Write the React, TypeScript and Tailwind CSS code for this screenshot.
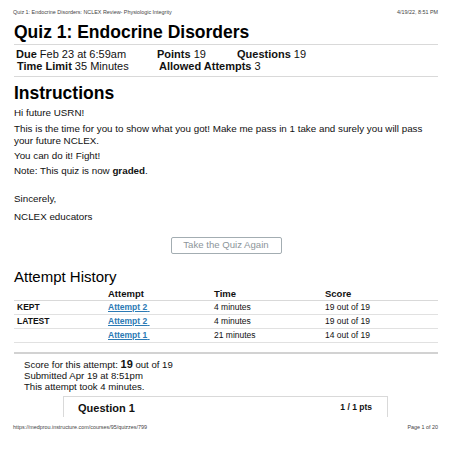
const attempts = [
  { label: "KEPT", attempt: "Attempt 2", time: "4 minutes", score: "19 out of 19" },
  { label: "LATEST", attempt: "Attempt 2", time: "4 minutes", score: "19 out of 19" },
  { label: "", attempt: "Attempt 1", time: "21 minutes", score: "14 out of 19" },
];

export default function App() {
  return (
    <div
      className="w-[452px] h-[452px] overflow-hidden bg-white text-[#111]"
      style={{ fontFamily: '"Liberation Sans", Arial, sans-serif' }}
    >
      {/* print header */}
      <div className="flex justify-between pl-[13px] pr-[14px] pt-[9px] text-[5.4px] leading-[6px] text-[#444]">
        <span>Quiz 1: Endocrine Disorders: NCLEX Review- Physiologic Integrity</span>
        <span>4/19/22, 8:51 PM</span>
      </div>

      <div className="px-[14px]">
        <h1 className="mt-[7px] text-[17.5px] font-bold leading-[20px] text-black">
          Quiz 1: Endocrine Disorders
        </h1>

        <div className="mt-[2px] border-t border-[#d9d9d9] pb-[4px] pt-[3px] text-[11px] leading-[12px]">
          <div className="flex pl-[2px]">
            <span className="w-[141px]">
              <b>Due</b> Feb 23 at 6:59am
            </span>
            <span className="w-[80px]">
              <b>Points</b> 19
            </span>
            <span>
              <b>Questions</b> 19
            </span>
          </div>
          <div className="flex pl-[3px]">
            <span className="w-[142px]">
              <b>Time Limit</b> 35 Minutes
            </span>
            <span>
              <b>Allowed Attempts</b> 3
            </span>
          </div>
        </div>
        <div className="border-t border-[#d9d9d9]" />

        <h2 className="mt-[6px] text-[17.5px] font-bold leading-[20px] text-black">Instructions</h2>

        <div className="mt-[4px] text-[9.8px] leading-[12px]">
          <p>Hi future USRN!</p>
          <p className="mt-[4px]">
            This is the time for you to show what you got! Make me pass in 1 take and surely you will pass your
            future NCLEX.
          </p>
          <p className="mt-[3px]">You can do it! Fight!</p>
          <p className="mt-[3px]">
            Note: This quiz is now <b>graded</b>.
          </p>
          <p className="mt-[16px]">Sincerely,</p>
          <p className="mt-[6px]">NCLEX educators</p>
        </div>

        <div className="mt-[14px] flex justify-center">
          <div className="flex h-[17px] w-[111px] items-center justify-center rounded-[2px] border border-[#a3adb2] text-[9.6px] text-[#8c959a]">
            Take the Quiz Again
          </div>
        </div>

        <h3 className="mt-[14px] text-[15px] leading-[18px] text-black">Attempt History</h3>

        <div className="mt-[2px] text-[8.5px]">
          <div className="flex h-[13px] items-center border-b border-[#d9d9d9] text-[9.5px] font-bold">
            <span className="w-[94px]" />
            <span className="w-[106px]">Attempt</span>
            <span className="w-[111px]">Time</span>
            <span>Score</span>
          </div>
          {attempts.map((a, i) => (
            <div key={i} className="flex h-[14px] items-center border-b border-[#e1e1e1]">
              <span className="w-[94px] pl-[3px] font-bold">{a.label}</span>
              <span className="w-[106px]">
                <span className="font-bold text-[#2b7ab4] underline">{a.attempt}{"\u00a0"}</span>
              </span>
              <span className="w-[111px]">{a.time}</span>
              <span>{a.score}</span>
            </div>
          ))}
        </div>
        <div className="mt-[9px] border-t-2 border-[#d2d2d2]" />

        <div className="mt-[5px] pl-[10px] text-[9.6px] leading-[11px]">
          <p>
            Score for this attempt: <span className="text-[11px] font-bold">19</span> out of 19
          </p>
          <p>Submitted Apr 19 at 8:51pm</p>
          <p>This attempt took 4 minutes.</p>
        </div>

        <div className="ml-[49px] mt-[4px] flex h-[21px] w-[325px] items-center justify-between border-l border-r border-t border-[#d9d9d9] pl-[14px] pr-[15px]">
          <span className="pt-[3px] text-[11px] font-bold">Question 1</span>
          <span className="text-[8.5px] font-bold">1 / 1 pts</span>
        </div>
      </div>

      <div className="mt-[7px] flex justify-between pl-[13px] pr-[14px] text-[5.4px] leading-[6px] text-[#444]">
        <span>https://medprou.instructure.com/courses/95/quizzes/799</span>
        <span>Page 1 of 20</span>
      </div>
    </div>
  );
}
